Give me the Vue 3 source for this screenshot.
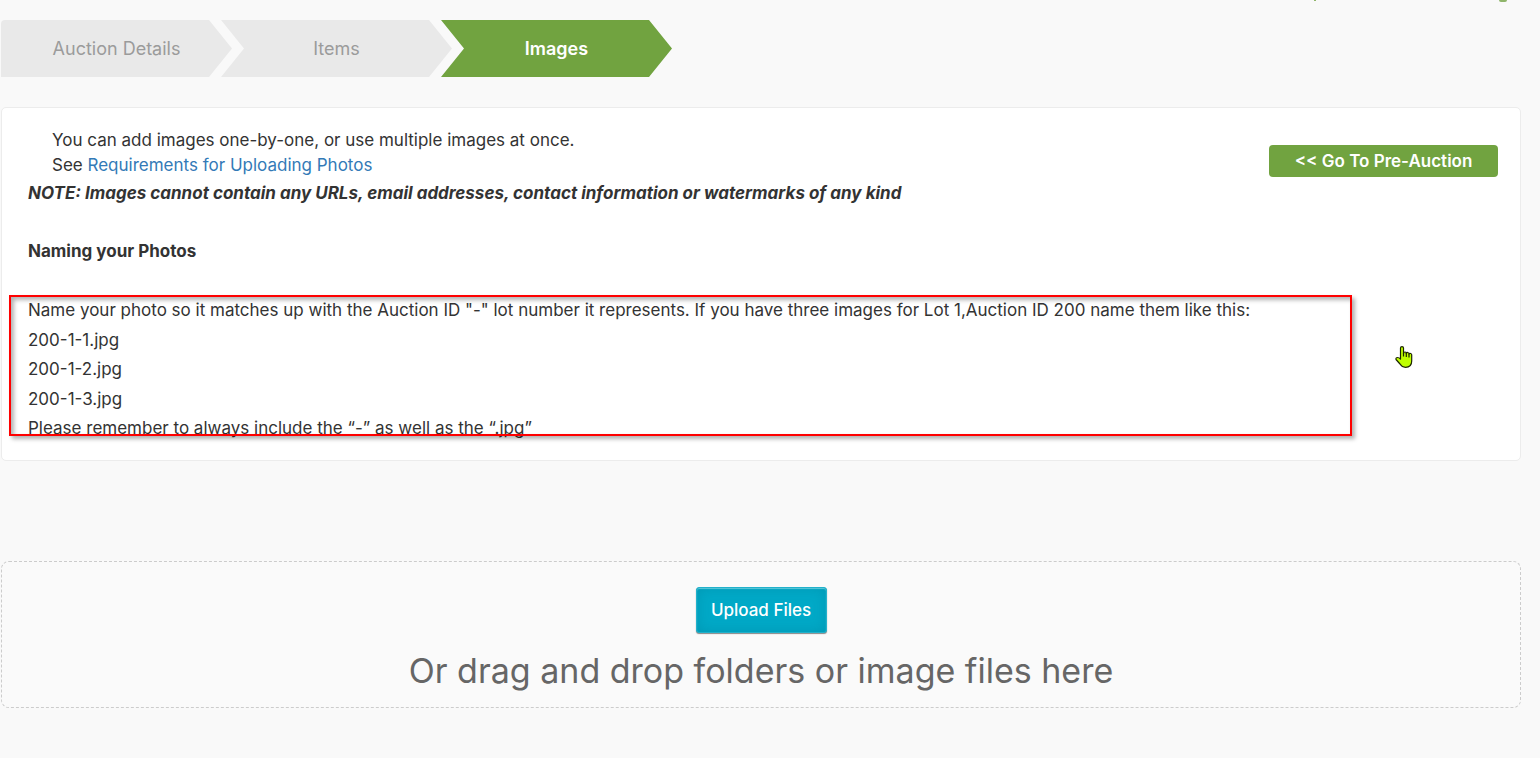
<script setup>
const steps = [
  { label: 'Auction Details', active: false },
  { label: 'Items', active: false },
  { label: 'Images', active: true },
]
const files = ['200-1-1.jpg', '200-1-2.jpg', '200-1-3.jpg']
</script>

<template>
  <div class="page">
    <div class="top-links"><i class="tail"></i><i class="tail round"></i></div>

    <nav class="steps" aria-label="Auction steps">
      <a
        v-for="step in steps"
        :key="step.label"
        href="#"
        class="step"
        :class="{ active: step.active }"
      >{{ step.label }}</a>
    </nav>

    <section class="card">
      <div class="intro-row">
        <div class="intro">
          <p>You can add images one-by-one, or use multiple images at once.</p>
          <p>See <a href="#">Requirements for Uploading Photos</a></p>
        </div>
        <button type="button" class="go-button">&lt;&lt; Go To Pre-Auction</button>
      </div>
      <p class="note">NOTE: Images cannot contain any URLs, email addresses, contact information or watermarks of any kind</p>
      <h2>Naming your Photos</h2>
      <div class="naming">
        <p>Name your photo so it matches up with the Auction ID "-" lot number it represents. If you have three images for Lot 1,Auction ID 200 name them like this:</p>
        <p v-for="file in files" :key="file">{{ file }}</p>
        <p>Please remember to always include the “-” as well as the “.jpg”</p>
        <div class="highlight"></div>
        <svg class="hand" width="18" height="22" viewBox="0 0 18 22" aria-hidden="true">
          <path
            d="M5.5 13V2Q5.500 .7 7 .7T8.500 2V7.500Q8.500 6 10 6T11.300 7.500Q11.600 6.300 12.800 6.500T14 8Q14.500 7 15.700 7.500T16.700 9V15Q16.700 21.300 10.500 21.300Q7 21.300 5 18L1 13.500Q.6 11.500 2.500 11.500Q4 11.500 5.500 13Z"
            fill="#bfff00" stroke="#1c2600" stroke-width="1.200" stroke-linejoin="round"
          />
          <path d="M8.500 7V10.500M11.300 7V11M14 8V11.500" fill="none" stroke="#1c2600" stroke-width="1.200" />
        </svg>
      </div>
    </section>

    <section class="dropzone">
      <button type="button" class="upload">Upload Files</button>
      <p>Or drag and drop folders or image files here</p>
    </section>
  </div>
</template>

<style>
body {
  background: #f9f9f9;
}
</style>

<style scoped>
.page {
  font-family: Inter, sans-serif;
  font-size: 17px;
  line-height: 25px;
  color: #333;
  padding: 0 19px 50px 1px;
}

p,
h2 {
  margin: 0;
}

a {
  color: #337ab7;
  text-decoration: none;
}

button {
  font-family: inherit;
  color: #fff;
  cursor: pointer;
}

.top-links {
  display: flex;
  justify-content: flex-end;
  gap: 183px;
  height: 2px;
  margin-bottom: 18px;
  padding-right: 14px;
}

.tail {
  width: 2px;
  height: 1px;
  background: #8fb56a;
}

.tail.round {
  width: 8px;
  height: 2px;
  border-radius: 0 0 4px 4px;
}

.steps {
  display: flex;
}

.step {
  width: 231px;
  margin-right: -11px;
  padding-top: 1px;
  line-height: 56px;
  text-align: center;
  font-size: 18px;
  color: #9b9b9b;
  background: #e9e9e9;
  clip-path: polygon(0 0, 208px 0, 100% 50%, 208px 100%, 0 100%, 23px 50%);
}

.step:first-child {
  border-radius: 4px 0 0 0;
  clip-path: polygon(0 0, 208px 0, 100% 50%, 208px 100%, 0 100%);
}

.step.active {
  color: #fff;
  font-weight: 600;
  background: #71a340;
}

.card {
  margin-top: 30px;
  padding: 20px 22px 17px 26px;
  border: 1px solid #ececec;
  border-radius: 5px;
  background: #fff;
}

.intro-row {
  display: flex;
  justify-content: space-between;
  align-items: flex-end;
}

.intro {
  padding-left: 24px;
}

.go-button {
  width: 229px;
  height: 32px;
  margin-bottom: 1px;
  padding: 0;
  border: 0;
  border-radius: 4px;
  background: #71a340;
  font-size: 17px;
  font-weight: 600;
}

.note {
  line-height: 30px;
  font-style: italic;
  font-weight: 700;
}

h2 {
  margin: 28px 0 30px;
  line-height: 30px;
  font-size: 17px;
  font-weight: 700;
}

.naming {
  position: relative;
  display: flex;
  flex-direction: column;
  justify-content: space-between;
  min-height: 147px;
  line-height: 29px;
}

.highlight {
  position: absolute;
  top: -1px;
  left: -19px;
  right: 146px;
  height: 137px;
  border: 2px solid #f00;
  box-shadow: 3px 3px 4px rgba(0, 0, 0, 0.3), inset 3px 3px 4px rgba(0, 0, 0, 0.3);
}

.hand {
  position: absolute;
  top: 50px;
  right: 85px;
}

.dropzone {
  display: flex;
  flex-direction: column;
  align-items: center;
  margin-top: 100px;
  padding: 25px 0 11px;
  border: 1px dashed #ccc;
  border-radius: 8px;
  background: #fafafa;
}

.upload {
  width: 131px;
  height: 46px;
  padding: 0;
  border: 1px solid #22b1cb;
  border-radius: 3px;
  background: #00a9c7;
  box-shadow: inset 0 1px 1px #5cc8da, inset 0 0 14px rgba(0, 80, 100, 0.2), 0 1px 1px #888;
  font-size: 17px;
  font-weight: 500;
}

.dropzone p {
  margin-top: 13px;
  line-height: 50px;
  font-size: 34px;
  color: #666;
}
</style>
